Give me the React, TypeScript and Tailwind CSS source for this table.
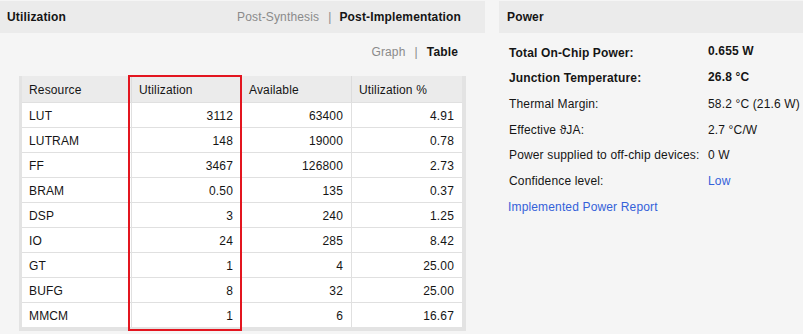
import React from "react";

const rows: [string, string, string, string][] = [
  ["LUT", "3112", "63400", "4.91"],
  ["LUTRAM", "148", "19000", "0.78"],
  ["FF", "3467", "126800", "2.73"],
  ["BRAM", "0.50", "135", "0.37"],
  ["DSP", "3", "240", "1.25"],
  ["IO", "24", "285", "8.42"],
  ["GT", "1", "4", "25.00"],
  ["BUFG", "8", "32", "25.00"],
  ["MMCM", "1", "6", "16.67"],
];

const power: { label: string; value: string; bold?: boolean; link?: boolean }[] = [
  { label: "Total On-Chip Power:", value: "0.655 W", bold: true },
  { label: "Junction Temperature:", value: "26.8 °C", bold: true },
  { label: "Thermal Margin:", value: "58.2 °C (21.6 W)" },
  { label: "Effective \u03D1JA:", value: "2.7 °C/W" },
  { label: "Power supplied to off-chip devices:", value: "0 W" },
  { label: "Confidence level:", value: "Low", link: true },
];

export default function App() {
  return (
    <div
      className="w-[803px] h-[334px] bg-[#f5f5f5] flex text-[12px] tracking-[0.15px] text-[#151515] overflow-hidden"
      style={{ fontFamily: '"Liberation Sans", Arial, "DejaVu Sans", sans-serif' }}
    >
      {/* Left: Utilization */}
      <div className="w-[485px] flex flex-col">
        <div className="mt-[1px] h-[32px] bg-[#ebebeb] flex items-center justify-between pl-[7px] pr-[24px]">
          <span className="font-bold">Utilization</span>
          <div className="flex items-center">
            <span className="text-[#8a8a8a]">Post-Synthesis</span>
            <span className="text-[#8a8a8a] ml-[9px] mr-[8px]">|</span>
            <span className="font-bold">Post-Implementation</span>
          </div>
        </div>
        <div className="h-[18px] mt-[10px] flex items-center justify-end pr-[27px]">
          <span className="text-[#8a8a8a]">Graph</span>
          <span className="text-[#8a8a8a] mx-[9px]">|</span>
          <span className="font-bold">Table</span>
        </div>
        <div className="relative mt-[15px] ml-[19px] w-[447px] bg-[#e3e3e3] pl-[3px] pr-[4px] pb-[4px]">
          <div className="grid grid-cols-[110px_110px_110px_110px]">
            {["Resource", "Utilization", "Available", "Utilization %"].map((h, i) => (
              <div
                key={h}
                className={`h-[26px] bg-[#ebebeb] flex items-center pl-[7px] pt-[2px] ${i < 3 ? "border-r border-[#dcdcdc]" : ""}`}
              >
                {h}
              </div>
            ))}
            {rows.map((r) =>
              r.map((c, i) => (
                <div
                  key={r[0] + i}
                  className={`h-[25px] bg-white border-t border-[#e0e0e0] flex items-center pt-[1px] ${
                    i === 0 ? "pl-[7px]" : "justify-end pr-[8px]"
                  } ${i < 3 ? "border-r" : ""}`}
                >
                  {c}
                </div>
              ))
            )}
          </div>
          <div className="absolute left-[109px] top-[-1px] w-[114px] h-[256px] border-2 border-[#e3151f] pointer-events-none" />
        </div>
      </div>

      {/* Right: Power */}
      <div className="ml-[14px] flex-1 flex flex-col">
        <div className="mt-[1px] h-[32px] bg-[#ebebeb] flex items-center pl-[8px]">
          <span className="font-bold">Power</span>
        </div>
        <div className="pl-[10px] pt-[7px] flex flex-col">
          {power.map((p, i) => (
            <div key={p.label} className="h-[25.67px] flex items-center">
              <span className={`w-[199px] ${p.bold ? "font-bold" : ""}`}>{p.label}</span>
              <span
                className={`${p.bold ? "font-bold" : ""} ${p.link ? "text-[#3461d9]" : ""} ${
                  i === 0 ? "-translate-y-[2px]" : i === 1 ? "-translate-y-[1px]" : ""
                }`}
              >
                {p.value}
              </span>
            </div>
          ))}
          <div className="h-[25.67px] flex items-center -ml-[1px] text-[#3461d9]">Implemented Power Report</div>
        </div>
      </div>
    </div>
  );
}
